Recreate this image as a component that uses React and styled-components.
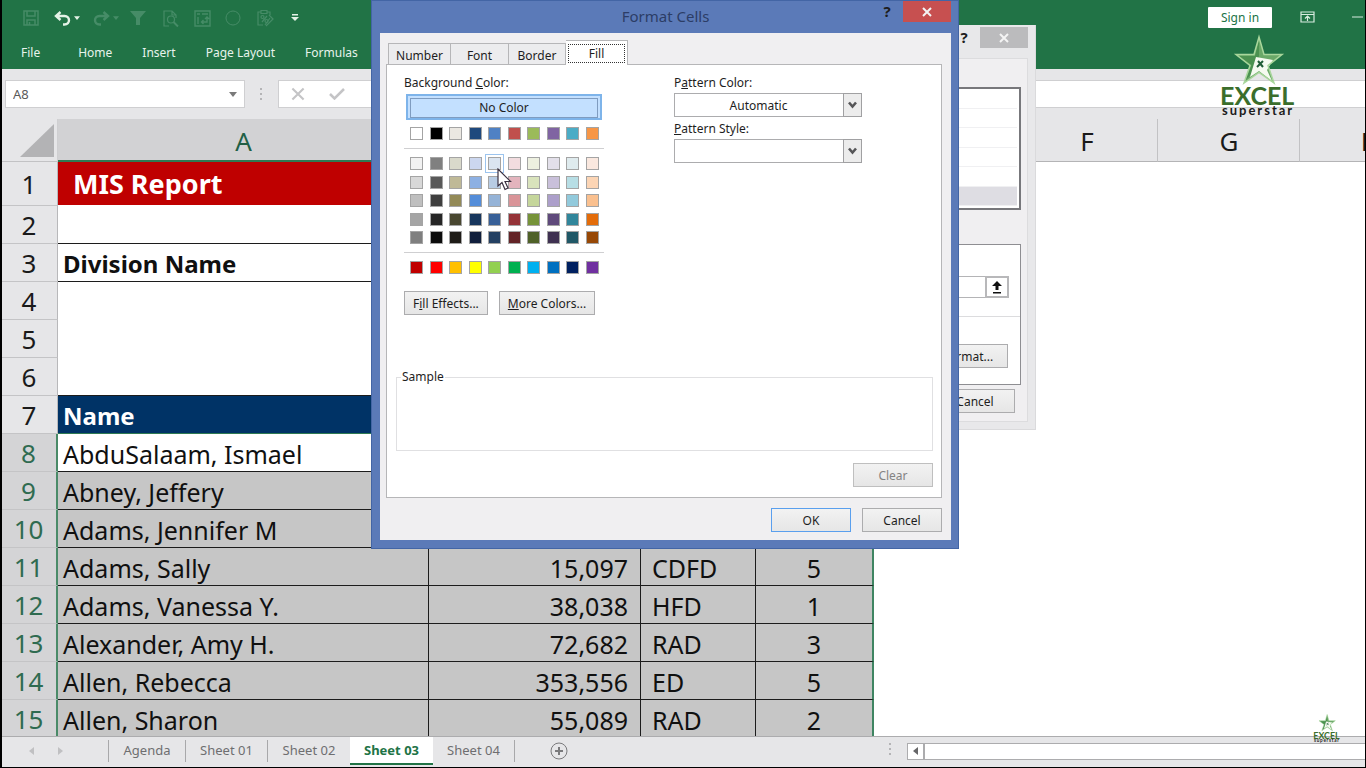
import React from 'react';
import styled, { createGlobalStyle } from 'styled-components';

const colors = {
    green: '#217346',
    chrome: '#e6e6e8',
    frame: '#5b7ab8',
    face: '#f0eff1',
    line: '#b4b4b6',
};

const GlobalStyle = createGlobalStyle`
    * {
        box-sizing: border-box;
    }

    body {
        margin: 0;
        background-color: #000000;
        font-family: 'Noto Sans', sans-serif;
        font-size: 12px;
        color: #1e1e1e;
        overflow: hidden;
    }

    button, input, select {
        font: inherit;
        color: inherit;
        margin: 0;
        padding: 0;
    }
`;

const Window = styled.div`
    position: relative;
    height: 100vh;
    display: flex;
    flex-direction: column;
    border: solid #000000;
    border-width: 0 1px 1px 2px;
    background-color: #ffffff;
    overflow: hidden;
`;

/* ---- title bar and ribbon ---- */

const TitleBar = styled.header`
    height: 36px;
    flex: none;
    display: flex;
    align-items: center;
    justify-content: space-between;
    background-color: ${colors.green};
`;

const QuickAccess = styled.div`
    display: flex;
    align-items: center;
    padding-left: 20px;
`;

const IconButton = styled.button`
    width: ${props => props.$width || 18}px;
    height: 20px;
    margin-right: ${props => props.$gap || 0}px;
    display: flex;
    align-items: center;
    justify-content: center;
    border: none;
    background: none;
    color: ${props => (props.$active ? '#e4f2e6' : '#468c67')};
`;

const WindowTools = styled.div`
    display: flex;
    align-items: center;
    gap: 28px;
`;

const SignIn = styled.button`
    width: 64px;
    height: 21px;
    margin-bottom: 2px;
    border: none;
    border-radius: 1px;
    background-color: #ffffff;
    color: ${colors.green};
`;

const ToolGlyphs = styled.div`
    display: flex;
    align-items: center;
    gap: 32px;
    margin-bottom: 2px;
    color: #d8ebdf;
`;

const Ribbon = styled.nav`
    height: 33px;
    flex: none;
    display: flex;
    align-items: center;
    gap: 30px;
    padding-left: 19px;
    background-color: ${colors.green};
`;

const RibbonTab = styled.a`
    color: #e8f3ec;
    text-decoration: none;
    line-height: 32px;
    white-space: nowrap;

    &:first-child {
        margin-right: 8px;
    }
`;

/* ---- formula bar ---- */

const FormulaBar = styled.div`
    height: 50px;
    flex: none;
    display: flex;
    align-items: flex-start;
    padding: 11px 0 0 3px;
    background-color: ${colors.chrome};
`;

const NameBox = styled.label`
    width: 240px;
    height: 28px;
    flex: none;
    display: flex;
    align-items: center;
    padding: 0 7px;
    border: 1px solid #cfcfd1;
    background-color: #ffffff;
    color: #7a7a7a;

    input {
        flex: 1;
        min-width: 0;
        border: none;
        background: none;
        font-size: 13px;
        color: #5a5a5a;
    }
`;

const DotsCell = styled.div`
    width: 33px;
    height: 28px;
    flex: none;
    display: flex;
    align-items: center;
    justify-content: center;
    color: #b4b4b6;
`;

const FormulaField = styled.div`
    flex: 1;
    height: 28px;
    display: flex;
    align-items: center;
    gap: 24px;
    padding-left: 12px;
    border: solid #cfcfd1;
    border-width: 1px 0 1px 1px;
    background-color: #ffffff;
    color: #c4c4c6;
`;

/* ---- grid ---- */

const SheetArea = styled.main`
    flex: 1;
    min-height: 0;
    overflow: hidden;
`;

const Sheet = styled.table`
    width: 1439px;
    table-layout: fixed;
    border-collapse: separate;
    border-spacing: 0;
`;

const ColumnHead = styled.th`
    height: 43px;
    padding: 2px 0 0 1px;
    font-size: 26px;
    line-height: 36px;
    font-weight: normal;
    color: ${props => (props.$selected ? '#215f45' : '#1a1a1a')};
    background-color: ${props => (props.$selected ? '#d2d2d4' : colors.chrome)};
    border-bottom: ${props => (props.$selected ? '2px solid #2f7a52' : '1px solid #b4b4b6')};
    border-right: 1px solid #c2c2c4;
`;

const Corner = styled.th`
    padding: 5px 3px 4px 0;
    background-color: ${colors.chrome};
    border-right: 1px solid #cfcfd1;
    border-bottom: 1px solid #c2c2c4;

    svg {
        display: block;
        margin-left: auto;
    }
`;

const RowHead = styled.th`
    height: ${props => props.$height}px;
    padding: 0 1px 0 0;
    font-size: 26px;
    line-height: 36px;
    font-weight: normal;
    color: ${props => (props.$selected ? '#2f6b50' : '#1a1a1a')};
    background-color: ${props => (props.$selected ? '#d4d4d6' : colors.chrome)};
    border-bottom: 1px solid #c4c4c6;
    border-right: ${props => (props.$selected ? '2px solid #4a8a68' : '1px solid #b8b8ba')};
`;

const fills = { red: '#bf0000', navy: '#003366', selected: '#c6c6c6' };
const rules = { black: '#1c1c1c', green: '#2f7a52' };

const Cell = styled.td`
    padding: ${props => (props.$title ? '0 12px 0 15px' : '2px 12px 0 5px')};
    font-size: ${props => (props.$title ? 27 : props.$bold ? 24 : 25)}px;
    line-height: 34px;
    font-weight: ${props => (props.$bold ? 'bold' : 'normal')};
    text-align: ${props => props.$align || 'left'};
    white-space: nowrap;
    color: ${props => (props.$light ? '#ffffff' : '#101010')};
    background-color: ${props => fills[props.$fill] || '#ffffff'};
    border-bottom: 1px solid ${props => rules[props.$rule] || '#ffffff'};
    border-right: ${props => (props.$grid ? '1px solid #1c1c1c' : 'none')};

    &:nth-child(4) {
        padding-left: 11px;
    }

    &:nth-child(5) {
        padding-left: 0;
        padding-right: 0;
        border-right: ${props => (props.$grid ? '2px solid #3f8562' : 'none')};
    }
`;

/* ---- sheet tabs ---- */

const StatusStrip = styled.footer`
    height: 31px;
    flex: none;
    display: flex;
    align-items: flex-start;
    border-top: 1px solid #acacae;
    background-color: ${colors.chrome};
    color: #6e6e70;
`;

const TabArrows = styled.div`
    width: 106px;
    height: 28px;
    display: flex;
    align-items: center;
    gap: 22px;
    padding-left: 25px;
    color: #c0c0c2;
`;

const SheetTab = styled.button`
    width: ${props => props.$width}px;
    height: 28px;
    padding-bottom: ${props => (props.$active ? 0 : 2)}px;
    border: none;
    border-bottom: ${props => (props.$active ? '2px solid #217346' : 'none')};
    background-color: ${props => (props.$active ? '#ffffff' : 'transparent')};
    color: ${props => (props.$active ? '#217346' : '#6e6e70')};
    font-size: 13px;
    font-weight: ${props => (props.$active ? 'bold' : 'normal')};
    white-space: nowrap;
`;

const TabRule = styled.span`
    width: 1px;
    height: 22px;
    margin-top: 3px;
    background-color: #a8a8aa;
`;

const AddSheet = styled.button`
    width: 88px;
    height: 28px;
    display: flex;
    align-items: center;
    justify-content: center;
    border: none;
    background: none;
    color: #7a7a7c;
`;

const ScrollZone = styled.div`
    width: 476px;
    height: 28px;
    margin-left: auto;
    display: flex;
    align-items: center;
`;

const ScrollDots = styled.div`
    width: 18px;
    color: #b4b4b6;
`;

const ScrollBack = styled.button`
    width: 17px;
    height: 17px;
    display: flex;
    align-items: center;
    justify-content: center;
    border: 1px solid #acacae;
    background-color: #ffffff;
    color: #666668;
`;

const ScrollTrack = styled.div`
    flex: 1;
    height: 17px;
    border: solid #acacae;
    border-width: 1px 0 1px 1px;
    background-color: #ffffff;
`;

/* ---- dialogs ---- */

const RuleDialog = styled.section`
    position: absolute;
    top: 25px;
    left: 418px;
    width: 616px;
    height: 405px;
    display: flex;
    flex-direction: column;
    padding: 0 7px 7px 8px;
    background-color: #e8e8ea;
    border-right: 1px solid #dadadc;
    border-bottom: 1px solid #dadadc;
`;

const RuleTitle = styled.div`
    height: 33px;
    flex: none;
    display: flex;
    align-items: flex-start;
    justify-content: flex-end;
    gap: 9px;
    padding-top: 2px;
`;

const Help = styled.button`
    width: 14px;
    height: 20px;
    border: none;
    background: none;
    font-size: 15px;
    line-height: 20px;
    font-weight: bold;
`;

const CloseButton = styled.button`
    width: 48px;
    height: 21px;
    display: flex;
    align-items: center;
    justify-content: center;
    border: none;
    color: #f4f4f4;
    background-color: ${props => (props.$live ? '#c75050' : '#bbbbbd')};
`;

const RuleBody = styled.div`
    flex: 1;
    padding: 28px 6px 0 7px;
    border: 1px solid #dcdcde;
    background-color: ${colors.face};
    display: flex;
    flex-direction: column;
`;

const RuleList = styled.ul`
    height: 123px;
    margin: 0 0 34px;
    padding: 0 2px 2px;
    display: grid;
    grid-auto-rows: 1fr;
    list-style: none;
    border: 2px solid #77777b;
    background-color: #ffffff;
`;

const RuleItem = styled.li`
    border-bottom: 1px solid #f0f0f2;
    background-color: ${props => (props.$chosen ? '#dedde3' : '#ffffff')};
`;

const RuleEditor = styled.div`
    height: 141px;
    border: 1px solid #8e8e92;
    background-color: #ffffff;
`;

const RuleFormula = styled.div`
    height: 72px;
    display: flex;
    align-items: flex-start;
    padding: 31px 11px 0;
    border-bottom: 1px solid #dcdcde;

    input {
        flex: 1;
        height: 22px;
        border: 1px solid #b4b4b6;
        border-right: none;
    }
`;

const PickButton = styled.button`
    width: 24px;
    height: 22px;
    display: flex;
    align-items: center;
    justify-content: center;
    border: 2px solid #b8b8ba;
    background-color: #ffffff;
`;

const ButtonRow = styled.div`
    display: flex;
    justify-content: ${props => props.$align || 'flex-end'};
    gap: 11px;
    padding: ${props => props.$pad || '0'};
`;

const PushButton = styled.button`
    min-width: 80px;
    height: 24px;
    padding: 0 8px;
    border: 1px solid ${props => (props.$primary ? '#5a9fee' : '#acacae')};
    background-image: linear-gradient(#f2f2f2, #e6e6e6);
    white-space: nowrap;

    &:disabled {
        color: #838383;
        border-color: #bfbfbf;
    }
`;

const FormatDialog = styled.section`
    position: absolute;
    top: 0;
    left: 369px;
    width: 588px;
    height: 549px;
    display: flex;
    flex-direction: column;
    padding: 0 7px 8px 8px;
    background-color: ${colors.frame};
    border: 1px solid #4365a5;
`;

const FormatTitle = styled.div`
    height: 32px;
    flex: none;
    display: grid;
    grid-template-columns: 1fr auto 1fr;
    align-items: start;
`;

const TitleText = styled.h1`
    grid-column: 2;
    margin: 0;
    font-size: 15px;
    line-height: 31px;
    font-weight: normal;
    color: #2c3d66;
`;

const TitleButtons = styled.div`
    display: flex;
    justify-content: flex-end;
    gap: 9px;
`;

const FormatBody = styled.div`
    flex: 1;
    padding: 7px 9px 0 6px;
    background-color: ${colors.face};
`;

const TabStrip = styled.div`
    height: 24px;
    display: flex;
    align-items: flex-end;
    padding-left: 2px;
`;

const DialogTab = styled.button`
    width: ${props => props.$width}px;
    height: ${props => (props.$active ? 25 : 21)}px;
    margin-bottom: ${props => (props.$active ? -1 : 0)}px;
    padding: 3px;
    border: 1px solid #b6b6b8;
    border-bottom: none;
    border-left-width: ${props => (props.$joined ? 0 : 1)}px;
    background-color: ${props => (props.$active ? '#ffffff' : '#ececee')};
    z-index: ${props => (props.$active ? 1 : 0)};

    span {
        display: block;
        line-height: 17px;
        outline: ${props => (props.$active ? '1px dotted #333333' : 'none')};
    }
`;

const TabPanel = styled.div`
    height: 434px;
    display: flex;
    flex-direction: column;
    padding: 9px 8px 0 9px;
    border: 1px solid #b6b6b8;
    background-color: #ffffff;
`;

const Choices = styled.div`
    height: 294px;
    flex: none;
    display: grid;
    grid-template-columns: 270px 188px;
    align-items: start;
    padding-left: 8px;
`;

const Palette = styled.div`
    width: 200px;
    display: flex;
    flex-direction: column;
`;

const Caption = styled.label`
    display: block;
    line-height: 18px;
    white-space: nowrap;
`;

const NoColor = styled.button`
    height: 26px;
    margin: 2px 2px 7px;
    padding: 2px;
    border: 2px solid #7eb4ea;
    background-color: #c3e0ff;

    span {
        display: block;
        line-height: 18px;
        border: 1px solid #7f9cc0;
    }
`;

const SwatchGrid = styled.div`
    height: ${props => props.$height}px;
    display: grid;
    grid-template-columns: repeat(10, 13px);
    justify-content: space-between;
    align-content: space-between;
    padding: 0 5px 0 6px;
`;

const Swatch = styled.button`
    width: 13px;
    height: 13px;
    border: 1px solid #a4a4a4;
    background-color: ${props => props.$color};
    outline: ${props => (props.$hovered ? '1px solid #9cc4ee' : 'none')};
    outline-offset: 2px;
`;

const Divider = styled.hr`
    width: 100%;
    height: 1px;
    margin: 8px 0;
    border: none;
    background-color: #cfcfd1;
`;

const Field = styled.div`
    display: flex;
    flex-direction: column;
    margin-bottom: 3px;
`;

const Combo = styled.div`
    display: grid;
    grid-template-columns: 1fr 19px;
    height: 24px;
    margin-top: 1px;

    select {
        grid-area: 1 / 1 / 2 / 3;
        appearance: none;
        width: 100%;
        padding-right: 19px;
        border: 1px solid #acacae;
        border-radius: 0;
        background-color: #ffffff;
        text-align-last: center;
    }
`;

const ComboArrow = styled.span`
    grid-area: 1 / 2 / 2 / 3;
    display: flex;
    align-items: center;
    justify-content: center;
    border: 1px solid #a0a0a2;
    background-color: #ececec;
    color: #555557;
    pointer-events: none;
`;

const Sample = styled.fieldset`
    height: 83px;
    margin: 0 0 12px;
    padding: 0;
    border: 1px solid #e0e0e2;

    legend {
        margin-left: 4px;
        padding: 0 1px;
        line-height: 18px;
    }
`;

const Pointer = styled.svg`
    position: absolute;
    left: 495px;
    top: 168px;
`;

/* ---- logo ---- */

const Logo = styled.div`
    position: absolute;
    right: ${props => (props.$small ? 24 : 67)}px;
    top: ${props => (props.$small ? 714 : 36)}px;

    svg {
        display: block;
        overflow: visible;
    }
`;

const columns = [
    { name: 'A', width: 371, selected: true },
    { name: 'B', width: 212, selected: true },
    { name: 'C', width: 115, selected: true },
    { name: 'D', width: 118, selected: true },
    { name: 'E', width: 142 },
    { name: 'F', width: 142 },
    { name: 'G', width: 142 },
    { name: 'H', width: 141 },
];

const rows = [
    { n: 1, values: ['MIS Report', '', '', ''], fill: 'red', bold: true, light: true, title: true },
    { n: 2, values: ['', '', '', ''], rule: 'black' },
    { n: 3, values: ['Division Name', '', '', ''], bold: true, rule: 'black' },
    { n: 4, values: ['', '', '', ''] },
    { n: 5, values: ['', '', '', ''] },
    { n: 6, values: ['', '', '', ''], rule: 'black' },
    { n: 7, values: ['Name', '', '', ''], fill: 'navy', bold: true, light: true, rule: 'green' },
    { n: 8, values: ['AbduSalaam, Ismael', '', '', ''], grid: true },
    { n: 9, values: ['Abney, Jeffery', '', '', ''], grid: true },
    { n: 10, values: ['Adams, Jennifer M', '', '', ''], grid: true },
    { n: 11, values: ['Adams, Sally', '15,097', 'CDFD', '5'], grid: true },
    { n: 12, values: ['Adams, Vanessa Y.', '38,038', 'HFD', '1'], grid: true },
    { n: 13, values: ['Alexander, Amy H.', '72,682', 'RAD', '3'], grid: true },
    { n: 14, values: ['Allen, Rebecca', '353,556', 'ED', '5'], grid: true },
    { n: 15, values: ['Allen, Sharon', '55,089', 'RAD', '2'], grid: true },
];

const aligns = ['left', 'right', 'left', 'center'];

const themeColors = [
    '#ffffff', '#000000', '#ebe8e2', '#1f497d', '#4f81c4', '#c0504d', '#9bbb59', '#8064a2', '#4bacc6', '#f79646',
];

const shades = [
    '#f2f2f2', '#808080', '#d9d9cb', '#ccd7ef', '#dbe5f1', '#f2dcdf', '#edf0e0', '#e3e0ea', '#dfebee', '#fae8df',
    '#d8d8d8', '#595959', '#bfb997', '#8db0e3', '#b8cce4', '#e3b4bd', '#d9e3bc', '#c9c0da', '#b7dee5', '#fcd5b5',
    '#bfbfbf', '#3f3f3f', '#938a57', '#548dd9', '#95b3d7', '#d99498', '#c5d69b', '#ac9fca', '#92cadc', '#fac08f',
    '#a5a5a5', '#262626', '#494730', '#17365d', '#386098', '#953338', '#769339', '#5f4a7b', '#31869b', '#e36c0a',
    '#7f7f7f', '#0c0c0c', '#1f1c17', '#101f3c', '#244062', '#632427', '#4f6128', '#3f3151', '#205867', '#974806',
];

const standardColors = [
    '#c00000', '#ff0000', '#ffc000', '#ffff00', '#92d050', '#00b050', '#00b0f0', '#0070c0', '#002060', '#7030a0',
];

const Caret = ({ size = 6 }) => (
    <svg width={size} height={size / 2 + 1} viewBox="0 0 8 5"><path d="M0 0h8L4 5z" fill="currentColor" /></svg>
);

const Dots = () => (
    <svg width="3" height="13" viewBox="0 0 3 13" fill="currentColor">
        <path d="M0 0h2v2H0zM0 5h2v2H0zM0 10h2v2H0z" />
    </svg>
);

const Cross = ({ size = 10, weight = 2 }) => (
    <svg width={size} height={size} viewBox="0 0 10 10" fill="none" stroke="currentColor" strokeWidth={weight}>
        <path d="M1 1l8 8M9 1L1 9" />
    </svg>
);

const Chevron = () => (
    <svg width="9" height="8" viewBox="0 0 9 8" fill="none" stroke="currentColor" strokeWidth="2.6">
        <path d="M1 1.5l3.5 4L8 1.5" />
    </svg>
);

const SaveIcon = () => (
    <svg width="16" height="16" viewBox="0 0 16 16" fill="none" stroke="currentColor" strokeWidth="1.5">
        <path d="M1 1h14v14H1zM4 1v5h8V1M4 15v-5h8v5M6.5 12v3" />
    </svg>
);

const UndoIcon = ({ flip }) => (
    <svg width="17" height="15" viewBox="0 0 17 15" fill="none" stroke="currentColor" strokeWidth="2.4">
        <g transform={flip ? 'translate(17 0) scale(-1 1)' : undefined}>
            <path d="M6.5 1L2 5l4.5 4M2 5h8.500c6 0 6 8.500 0 8.500H9" />
        </g>
    </svg>
);

const FilterIcon = () => (
    <svg width="16" height="16" viewBox="0 0 16 16" fill="currentColor"><path d="M0 1h16l-6 7v7H6V8z" /></svg>
);

const PreviewIcon = () => (
    <svg width="16" height="17" viewBox="0 0 16 17" fill="none" stroke="currentColor" strokeWidth="1.2">
        <path d="M6 16H1V1h8l4 4v3M9 1v4h4" />
        <circle cx="8" cy="9.5" r="3.5" />
        <path d="M10.5 12l4.5 4.5" strokeWidth="2" />
    </svg>
);

const PivotIcon = () => (
    <svg width="17" height="17" viewBox="0 0 17 17" fill="none" stroke="currentColor" strokeWidth="1.4">
        <path d="M1 1h15v15H1zM3 4h3M8 4h6M4 7v7M8 12h5V7M11 9l2-2 2 2M9.5 10l-2 2 2 2" />
    </svg>
);

const CircleIcon = () => (
    <svg width="16" height="16" viewBox="0 0 16 16" fill="none" stroke="currentColor"><circle cx="8" cy="8" r="7" /></svg>
);

const ClipboardIcon = () => (
    <svg width="17" height="18" viewBox="0 0 17 18" fill="none" stroke="currentColor" strokeWidth="1.2">
        <path d="M4 3H1v13h5M10 3h3v3M4 1.500h6v3H4zM5 13l5-6" />
        <circle cx="5.5" cy="8" r="1.5" />
        <circle cx="9.5" cy="12" r="1.5" />
        <path d="M12 6l4 4-7 7M13 9l-5 7" />
    </svg>
);

const CustomizeIcon = () => (
    <svg width="8" height="8" viewBox="0 0 8 8" fill="currentColor"><path d="M1 0h6v1.500H1zM0 3h8L4 7z" /></svg>
);

const RibbonDisplayIcon = () => (
    <svg width="15" height="12" viewBox="0 0 15 12" fill="none" stroke="currentColor" strokeWidth="1.2">
        <path d="M1 1h13v10H1zM1 3.500h13M7.500 10V5.500M5 7.500L7.500 5 10 7.500" />
    </svg>
);

const LogoMark = ({ width, height }) => (
    <svg width={width} height={height} viewBox="0 0 76 84">
        <path d="M37 1l5 17.500h18L46 29.500 52 47 37 36.500 22 47l6-17.500L14 18.500h18z" fill="#6aa868" />
        <path d="M37 4v16l-4 14-10 11 6.500-16L17 20h16z" fill="#4b9150" />
        <path d="M34 21l17 3-3 5-3 5 5 11-13-10-9 6z" fill="#f5faf0" />
        <path d="M37 1l5 17.500h18L46 29.500 52 47 37 36.500 22 47l6-17.500L14 18.500h18z" fill="none" stroke="#a9d69c" strokeWidth="1.5" />
        <path d="M36 25l5 6M41 25l-6 6" stroke="#1f5c36" strokeWidth="2" />
        <text x="-2" y="69" fontFamily="Lato, sans-serif" fontSize="25" fontWeight="bold" fill="#3b6e2c">EXCEL</text>
        <text x="0" y="79" fontFamily="Lato, sans-serif" fontSize="13" fontWeight="bold" letterSpacing="2" fill="#1b1b1b">superstar</text>
    </svg>
);

const Swatches = ({ list, height, hovered }) => (
    <SwatchGrid $height={height}>
        {list.map((color, i) => (
            <Swatch key={color} type="button" aria-label={color} $color={color} $hovered={i === hovered} />
        ))}
    </SwatchGrid>
);

function ExcelHeader() {
    return (
        <>
            <TitleBar>
                <QuickAccess>
                    <IconButton $gap={13} aria-label="Save"><SaveIcon /></IconButton>
                    <IconButton $active aria-label="Undo"><UndoIcon /></IconButton>
                    <IconButton $active $width={12} $gap={9} aria-label="Undo list"><Caret /></IconButton>
                    <IconButton aria-label="Redo"><UndoIcon flip /></IconButton>
                    <IconButton $width={12} $gap={7} aria-label="Redo list"><Caret /></IconButton>
                    <IconButton $gap={15} aria-label="Filter"><FilterIcon /></IconButton>
                    <IconButton $gap={13} aria-label="Print preview"><PreviewIcon /></IconButton>
                    <IconButton $gap={13} aria-label="Pivot table"><PivotIcon /></IconButton>
                    <IconButton $gap={14} aria-label="Oval"><CircleIcon /></IconButton>
                    <IconButton $gap={12} aria-label="Paste values"><ClipboardIcon /></IconButton>
                    <IconButton $active aria-label="Customize"><CustomizeIcon /></IconButton>
                </QuickAccess>
                <WindowTools>
                    <SignIn>Sign in</SignIn>
                    <ToolGlyphs>
                        <RibbonDisplayIcon />
                        <svg width="18" height="2" viewBox="0 0 18 2"><path d="M5 1h11" stroke="currentColor" /></svg>
                    </ToolGlyphs>
                </WindowTools>
            </TitleBar>
            <Ribbon>
                {['File', 'Home', 'Insert', 'Page Layout', 'Formulas'].map(name => (
                    <RibbonTab key={name} href="#">{name}</RibbonTab>
                ))}
            </Ribbon>
            <FormulaBar>
                <NameBox>
                    <input defaultValue="A8" aria-label="Name box" />
                    <Caret size={8} />
                </NameBox>
                <DotsCell><Dots /></DotsCell>
                <FormulaField>
                    <Cross size={14} weight={1.5} />
                    <svg width="16" height="12" viewBox="0 0 16 12" fill="none" stroke="currentColor" strokeWidth="2.5">
                        <path d="M1 6l4.500 4.500L15 1" />
                    </svg>
                </FormulaField>
            </FormulaBar>
        </>
    );
}

function Grid() {
    return (
        <SheetArea>
            <Sheet>
                <colgroup>
                    <col width="56" />
                    {columns.map(c => <col key={c.name} width={c.width} />)}
                </colgroup>
                <thead>
                    <tr>
                        <Corner>
                            <svg width="34" height="33" viewBox="0 0 34 33"><path d="M34 0v33H0z" fill="#b3b3b5" /></svg>
                        </Corner>
                        {columns.map(c => <ColumnHead key={c.name} $selected={c.selected}>{c.name}</ColumnHead>)}
                    </tr>
                </thead>
                <tbody>
                    {rows.map(row => (
                        <tr key={row.n}>
                            <RowHead $height={row.n === 1 ? 44 : 38} $selected={row.n > 7}>{row.n}</RowHead>
                            {row.values.map((value, i) => (
                                <Cell
                                    key={i}
                                    $fill={row.fill || (row.grid && !(row.n === 8 && i === 0) ? 'selected' : undefined)}
                                    $bold={row.bold}
                                    $light={row.light}
                                    $title={row.title}
                                    $rule={row.grid ? 'black' : row.rule}
                                    $grid={row.grid}
                                    $align={aligns[i]}
                                >
                                    {value}
                                </Cell>
                            ))}
                        </tr>
                    ))}
                </tbody>
            </Sheet>
        </SheetArea>
    );
}

function SheetTabs() {
    return (
        <StatusStrip>
            <TabArrows>
                <svg width="8" height="8" viewBox="0 0 8 8"><path d="M7 0v8L2 4z" fill="currentColor" /></svg>
                <svg width="8" height="8" viewBox="0 0 8 8"><path d="M1 0v8l5-4z" fill="currentColor" /></svg>
            </TabArrows>
            <TabRule />
            <SheetTab $width={76}>Agenda</SheetTab>
            <TabRule />
            <SheetTab $width={81}>Sheet 01</SheetTab>
            <TabRule />
            <SheetTab $width={82}>Sheet 02</SheetTab>
            <SheetTab $width={83} $active>Sheet 03</SheetTab>
            <SheetTab $width={81}>Sheet 04</SheetTab>
            <TabRule />
            <AddSheet aria-label="New sheet">
                <svg width="18" height="18" viewBox="0 0 18 18" fill="none" stroke="currentColor">
                    <circle cx="9" cy="9" r="8" />
                    <path d="M9 5v8M5 9h8" strokeWidth="2" />
                </svg>
            </AddSheet>
            <ScrollZone>
                <ScrollDots><Dots /></ScrollDots>
                <ScrollBack aria-label="Scroll left">
                    <svg width="5" height="8" viewBox="0 0 5 8"><path d="M5 0v8L0 4z" fill="currentColor" /></svg>
                </ScrollBack>
                <ScrollTrack />
            </ScrollZone>
        </StatusStrip>
    );
}

function NewRuleDialog() {
    return (
        <RuleDialog>
            <RuleTitle>
                <Help>?</Help>
                <CloseButton aria-label="Close"><Cross /></CloseButton>
            </RuleTitle>
            <RuleBody>
                <RuleList>
                    {[1, 2, 3, 4, 5, 6].map(n => <RuleItem key={n} $chosen={n === 6} />)}
                </RuleList>
                <RuleEditor>
                    <RuleFormula>
                        <input aria-label="Formula" />
                        <PickButton aria-label="Select range">
                            <svg width="12" height="13" viewBox="0 0 12 13" fill="#111111">
                                <path d="M6 0l5 5H7.500v4h-3V5H1zM2 11h8v1.500H2z" />
                            </svg>
                        </PickButton>
                    </RuleFormula>
                    <ButtonRow $pad="27px 12px 0"><PushButton>Format...</PushButton></ButtonRow>
                </RuleEditor>
                <ButtonRow $pad="4px 6px 0"><PushButton>Cancel</PushButton></ButtonRow>
            </RuleBody>
        </RuleDialog>
    );
}

function FormatCells() {
    return (
        <FormatDialog>
            <FormatTitle>
                <TitleText>Format Cells</TitleText>
                <TitleButtons>
                    <Help>?</Help>
                    <CloseButton $live aria-label="Close"><Cross /></CloseButton>
                </TitleButtons>
            </FormatTitle>
            <FormatBody>
                <TabStrip>
                    <DialogTab $width={63}><span>Number</span></DialogTab>
                    <DialogTab $width={58} $joined><span>Font</span></DialogTab>
                    <DialogTab $width={57} $joined><span>Border</span></DialogTab>
                    <DialogTab $width={62} $active $joined><span>Fill</span></DialogTab>
                </TabStrip>
                <TabPanel>
                    <Choices>
                        <Palette>
                            <Caption as="span">Background <u>C</u>olor:</Caption>
                            <NoColor><span>No Color</span></NoColor>
                            <Swatches list={themeColors} height={13} />
                            <Divider />
                            <Swatches list={shades} height={87} hovered={4} />
                            <Divider />
                            <Swatches list={standardColors} height={13} />
                            <ButtonRow $align="flex-start" $pad="17px 0 0">
                                <PushButton>F<u>i</u>ll Effects...</PushButton>
                                <PushButton><u>M</u>ore Colors...</PushButton>
                            </ButtonRow>
                        </Palette>
                        <div>
                            <Field>
                                <Caption htmlFor="pattern-color">P<u>a</u>ttern Color:</Caption>
                                <Combo>
                                    <select id="pattern-color"><option>Automatic</option></select>
                                    <ComboArrow><Chevron /></ComboArrow>
                                </Combo>
                            </Field>
                            <Field>
                                <Caption htmlFor="pattern-style"><u>P</u>attern Style:</Caption>
                                <Combo>
                                    <select id="pattern-style"><option aria-label="None" /></select>
                                    <ComboArrow><Chevron /></ComboArrow>
                                </Combo>
                            </Field>
                        </div>
                    </Choices>
                    <Sample><legend>Sample</legend></Sample>
                    <ButtonRow><PushButton disabled>Clear</PushButton></ButtonRow>
                </TabPanel>
                <ButtonRow $pad="10px 0 0"><PushButton $primary>OK</PushButton><PushButton>Cancel</PushButton></ButtonRow>
            </FormatBody>
        </FormatDialog>
    );
}

export default function App() {
    return (
        <>
            <GlobalStyle />
            <Window>
                <ExcelHeader />
                <Grid />
                <SheetTabs />
                <NewRuleDialog />
                <FormatCells />
                <Pointer width="16" height="24" viewBox="0 0 16 24">
                    <path d="M1 1v17l4-3.500 3 7 3-1.500-3-6.500h5.500z" fill="#ffffff" stroke="#3a3040" strokeWidth="1.2" />
                </Pointer>
                <Logo><LogoMark width="76" height="84" /></Logo>
                <Logo $small><LogoMark width="27" height="30" /></Logo>
            </Window>
        </>
    );
}
